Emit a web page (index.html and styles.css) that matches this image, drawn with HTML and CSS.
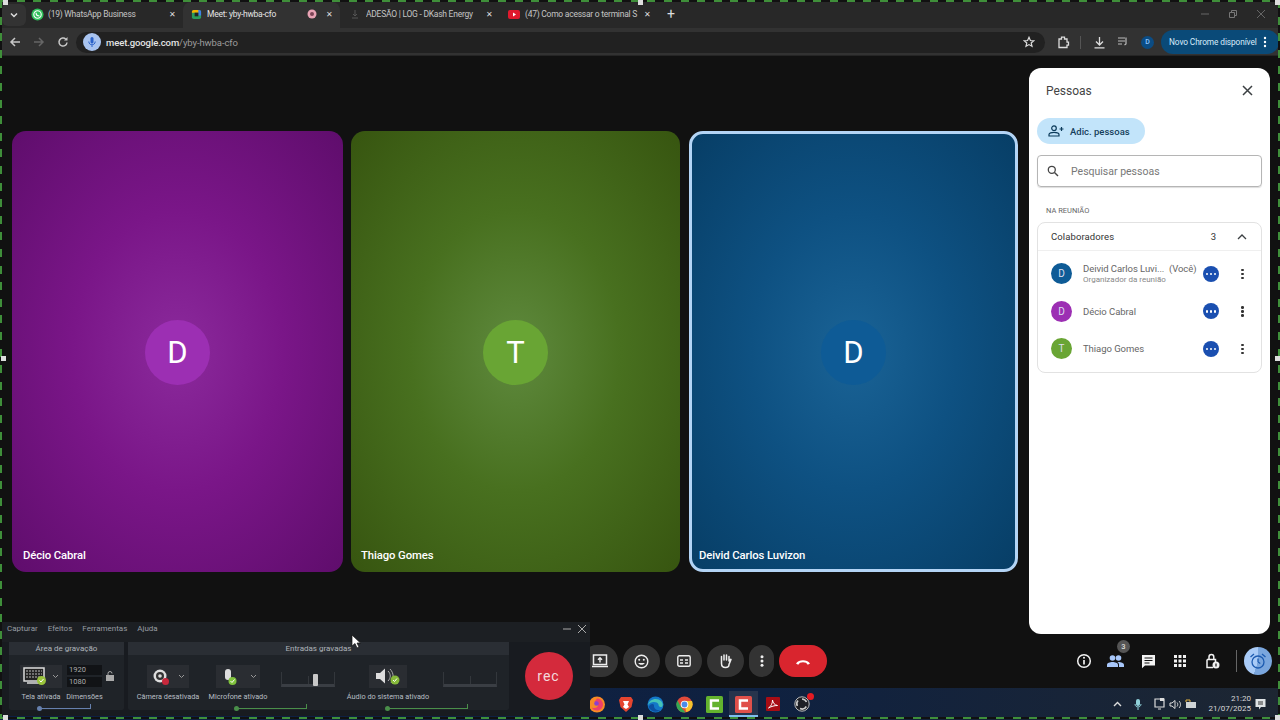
FILE: index.html
```html
<!DOCTYPE html>
<html lang="pt-BR">
<head>
<meta charset="utf-8">
<title>Meet: yby-hwba-cfo</title>
<link rel="stylesheet" href="styles.css">
</head>
<body>
<div class="screen">
  <header class="tabstrip">
    <div class="tab-menu"><svg width="10" height="10" viewBox="0 0 10 10"><path d="M2 3.5 5 6.5 8 3.5" fill="none" stroke="#ddd" stroke-width="1.5"/></svg></div>
    <div class="tab tab-wa">
      <svg class="fav" width="13" height="13" viewBox="0 0 14 14"><circle cx="7" cy="7" r="6.5" fill="#2fc25b"/><circle cx="7" cy="7" r="4" fill="none" stroke="#fff" stroke-width="1.2"/><path d="M5.5 5c0 2 1.500 3.500 3.500 3.500" stroke="#fff" stroke-width="1.300" fill="none"/></svg>
      <span class="tab-title">(19) WhatsApp Business</span>
      <span class="tab-x">✕</span>
    </div>
    <div class="tab tab-active">
      <svg class="fav" width="11" height="11" viewBox="0 0 12 12"><rect x="1" y="1" width="10" height="10" rx="2" fill="#2a9d5c"/><path d="M1 3a2 2 0 0 1 2-2h6v3H1z" fill="#f4b400"/><path d="M8 1h1a2 2 0 0 1 2 2v4H8z" fill="#3f7fe8"/><rect x="4" y="4" width="4" height="4" fill="#232323"/></svg>
      <span class="tab-title tab-title-on">Meet: yby-hwba-cfo</span>
      <svg class="rec-dot" width="10" height="10" viewBox="0 0 10 10"><circle cx="5" cy="5" r="4.500" fill="#e8a3b4"/><circle cx="5" cy="5" r="2" fill="#7d4456"/></svg>
      <span class="tab-x">✕</span>
    </div>
    <div class="tab tab-ad">
      <svg class="fav" width="8" height="10" viewBox="0 0 8 10"><path d="M4 1v6M2 5l2 2 2-2M1 9h6" stroke="#555" fill="none"/></svg>
      <span class="tab-title">ADESÃO | LOG - DKash Energy</span>
      <span class="tab-x">✕</span>
    </div>
    <div class="tab tab-yt">
      <svg class="fav" width="12" height="9" viewBox="0 0 12 9"><rect width="12" height="9" rx="2" fill="#e0192d"/><path d="M5 2.500v4L8 4.500z" fill="#fff"/></svg>
      <span class="tab-title">(47) Como acessar o terminal S</span>
      <span class="tab-x">✕</span>
    </div>
    <span class="tab-new">+</span>
    <div class="win-btns">
      <svg width="10" height="10" viewBox="0 0 10 10"><path d="M1 5h8" stroke="#666"/></svg>
      <svg width="10" height="10" viewBox="0 0 10 10"><path d="M1.500 3.500h5v5h-5zM3.500 3.500v-2h5v5h-2" stroke="#777" fill="none"/></svg>
      <svg width="10" height="10" viewBox="0 0 10 10"><path d="M1 1l8 8M9 1l-8 8" stroke="#666"/></svg>
    </div>
  </header>

  <nav class="toolbar">
    <svg class="nav-ic" width="12" height="12" viewBox="0 0 12 12"><path d="M11 6H2M6 2 2 6l4 4" fill="none" stroke="#c8c8c8" stroke-width="1.500"/></svg>
    <svg class="nav-ic" width="12" height="12" viewBox="0 0 12 12"><path d="M1 6h9M6 2l4 4-4 4" fill="none" stroke="#666" stroke-width="1.500"/></svg>
    <svg class="nav-ic" width="12" height="12" viewBox="0 0 12 12"><path d="M10 6.500A4 4 0 1 1 8.800 3.200" fill="none" stroke="#c8c8c8" stroke-width="1.500"/><path d="M10.500 1v3.500H7z" fill="#c8c8c8"/></svg>
    <div class="omnibox">
      <span class="mic-pill"><svg width="10" height="12" viewBox="0 0 10 12"><rect x="3.500" y="1" width="3" height="6.500" rx="1.500" fill="#2b62c9"/><path d="M1.800 5.500c0 4.400 6.400 4.400 6.400 0M5 9.200V11" fill="none" stroke="#2b62c9"/></svg></span>
      <span class="url"><b>meet.google.com</b>/yby-hwba-cfo</span>
      <svg class="star" width="12" height="12" viewBox="0 0 12 12"><path d="M6 1.300 7.400 4.500l3.400.3-2.600 2.200.8 3.300L6 8.600 3 10.300l.8-3.300L1.200 4.800l3.400-.3z" fill="none" stroke="#ddd" stroke-width="1.200"/></svg>
    </div>
    <div class="tool-right">
      <svg width="14" height="14" viewBox="0 0 14 14"><path d="M3 4h2.500V2.200h3V4H11v3.200h1.500v3H11V12.500H3z" fill="none" stroke="#ddd" stroke-width="1.300"/></svg>
      <span class="tool-sep"></span>
      <svg class="ic-dl" width="13" height="13" viewBox="0 0 13 13"><path d="M6.500 1v7.500M3 5.500l3.500 3.500L10 5.500M1.500 11.800h10" fill="none" stroke="#ddd" stroke-width="1.300"/></svg>
      <svg class="ic-list" width="12" height="12" viewBox="0 0 12 12"><path d="M1 2h7M1 5h7M1 8h4" stroke="#bbb" stroke-width="1.200"/><path d="M9 1.500V8l-1.500 1" stroke="#bbb" stroke-width="1.200" fill="none"/></svg>
      <span class="avatar-mini">D</span>
      <span class="update-pill">Novo Chrome disponível<svg width="4" height="12" viewBox="0 0 4 12"><circle cx="2" cy="2" r="1.200" fill="#fff"/><circle cx="2" cy="6" r="1.200" fill="#fff"/><circle cx="2" cy="10" r="1.200" fill="#fff"/></svg></span>
    </div>
  </nav>

  <main class="meet">
    <div class="meet-top">
      <section class="tiles">
        <article class="tile tile-purple"><span class="tile-av av-purple">D</span><span class="tile-name">Décio Cabral</span></article>
        <article class="tile tile-green"><span class="tile-av av-green">T</span><span class="tile-name">Thiago Gomes</span></article>
        <article class="tile tile-blue"><span class="tile-av av-blue">D</span><span class="tile-name">Deivid Carlos Luvizon</span></article>
      </section>
      <aside class="panel">
        <div class="panel-head">
          <h2>Pessoas</h2>
          <svg width="11" height="11" viewBox="0 0 11 11"><path d="M1 1l9 9M10 1l-9 9" stroke="#3c4043" stroke-width="1.500"/></svg>
        </div>
        <button class="add-btn"><svg width="16" height="12" viewBox="0 0 16 12"><circle cx="6" cy="3.200" r="2.300" fill="none" stroke="#0b3a5a" stroke-width="1.200"/><path d="M1 11V9.500C1 8 3.500 7.300 6 7.300s5 .7 5 2.200V11z" fill="none" stroke="#0b3a5a" stroke-width="1.200"/><path d="M11.500 4h4M13.500 2v4" stroke="#0b3a5a" stroke-width="1.200"/></svg>Adic. pessoas</button>
        <div class="search"><svg width="12" height="12" viewBox="0 0 12 12"><circle cx="4.800" cy="4.800" r="3.500" fill="none" stroke="#444" stroke-width="1.300"/><path d="M7.500 7.500 11 11" stroke="#444" stroke-width="1.400"/></svg><span>Pesquisar pessoas</span></div>
        <div class="section-label">NA REUNIÃO</div>
        <div class="card">
          <div class="card-head"><span class="card-title">Colaboradores</span><span class="card-count">3</span><svg width="10" height="6" viewBox="0 0 10 6"><path d="M1 5l4-4 4 4" fill="none" stroke="#3c4043" stroke-width="1.300"/></svg></div>
          <div class="people">
            <div class="person">
              <span class="p-av av-blue">D</span>
              <div class="p-text"><span class="p-name">Deivid Carlos Luvi...&nbsp;&nbsp;(Você)</span><span class="p-sub">Organizador da reunião</span></div>
              <span class="p-more"><i></i><i></i><i></i></span>
              <span class="kebab"><i></i><i></i><i></i></span>
            </div>
            <div class="person">
              <span class="p-av av-purple">D</span>
              <div class="p-text"><span class="p-name">Décio Cabral</span></div>
              <span class="p-more"><i></i><i></i><i></i></span>
              <span class="kebab"><i></i><i></i><i></i></span>
            </div>
            <div class="person">
              <span class="p-av av-green">T</span>
              <div class="p-text"><span class="p-name">Thiago Gomes</span></div>
              <span class="p-more"><i></i><i></i><i></i></span>
              <span class="kebab"><i></i><i></i><i></i></span>
            </div>
          </div>
        </div>
      </aside>
    </div>
    <div class="controls">
      <div class="ctrl-center">
        <span class="c-btn"><svg width="16" height="14" viewBox="0 0 16 14"><rect x="1.500" y="1" width="13" height="9.500" fill="none" stroke="#eee" stroke-width="1.500"/><path d="M8 8.500V4M6 5.800 8 3.700l2 2.100M0 12.500h16" fill="none" stroke="#eee" stroke-width="1.400"/></svg></span>
        <span class="c-btn"><svg width="15" height="15" viewBox="0 0 15 15"><circle cx="7.500" cy="7.500" r="6.300" fill="none" stroke="#eee" stroke-width="1.400"/><circle cx="5.200" cy="5.800" r="1" fill="#eee"/><circle cx="9.800" cy="5.800" r="1" fill="#eee"/><path d="M4.300 9h6.400c-.6 2.400-5.800 2.400-6.400 0z" fill="#eee"/></svg></span>
        <span class="c-btn"><svg width="14" height="12" viewBox="0 0 14 12"><rect x=".8" y=".8" width="12.400" height="10.400" rx="1.500" fill="none" stroke="#eee" stroke-width="1.400"/><path d="M3 5h3M8 5h3M3 8h3M8 8h3" stroke="#eee" stroke-width="1.300"/></svg></span>
        <span class="c-btn"><svg width="15" height="16" viewBox="0 0 15 16"><path d="M3.500 8V3.500M6 7V2M8.500 7V2M11 8V3.500M11 8l1.800-1.800M3.500 8v2.500c0 2.500 1.800 4 4 4s3.500-1.500 3.500-3L13 6.500" fill="none" stroke="#eee" stroke-width="1.500" stroke-linecap="round"/></svg></span>
        <span class="c-btn c-narrow"><svg width="4" height="12" viewBox="0 0 4 12"><circle cx="2" cy="1.700" r="1.500" fill="#eee"/><circle cx="2" cy="6" r="1.500" fill="#eee"/><circle cx="2" cy="10.300" r="1.500" fill="#eee"/></svg></span>
        <span class="c-btn c-end"><svg width="16" height="7" viewBox="0 0 16 7"><path d="M1 5.500C4 1.200 12 1.200 15 5.500l-2.200 1.300-1.800-2c-2-.7-4-.7-6 0l-1.800 2z" fill="#fff"/></svg></span>
      </div>
      <div class="ctrl-right">
        <svg width="16" height="16" viewBox="0 0 16 16"><circle cx="8" cy="8" r="6.300" fill="none" stroke="#f2f2f2" stroke-width="1.500"/><path d="M8 7v4.500" stroke="#f2f2f2" stroke-width="1.700"/><circle cx="8" cy="4.800" r="1" fill="#f2f2f2"/></svg>
        <span class="people-ic"><svg width="17" height="12" viewBox="0 0 17 12"><circle cx="5.500" cy="3" r="2.800" fill="#a8c7fa"/><circle cx="11.500" cy="3" r="2.800" fill="#a8c7fa"/><path d="M0 12V9.800C0 8 3 7 5.500 7S11 8 11 9.800V12zM12 12V9.800c0-1-.5-2-1.800-2.700C13 6.700 17 7.800 17 9.800V12z" fill="#a8c7fa"/></svg><span class="people-badge">3</span></span>
        <svg width="15" height="15" viewBox="0 0 15 15"><path d="M1 1h13v10.500H4L1 14.200z" fill="#f2f2f2"/><path d="M3.500 4h8M3.500 6.500h8M3.500 9h5" stroke="#111" stroke-width="1"/></svg>
        <svg width="12" height="12" viewBox="0 0 12 12"><g fill="#f2f2f2"><rect width="3" height="3"/><rect x="4.500" width="3" height="3"/><rect x="9" width="3" height="3"/><rect y="4.500" width="3" height="3"/><rect x="4.500" y="4.500" width="3" height="3"/><rect x="9" y="4.500" width="3" height="3"/><rect y="9" width="3" height="3"/><rect x="4.500" y="9" width="3" height="3"/><rect x="9" y="9" width="3" height="3"/></g></svg>
        <svg width="15" height="16" viewBox="0 0 15 16"><path d="M2 6.500h8.500V9M2 6.500v8h6M4 6.500V4a2.400 2.400 0 0 1 4.800 0v2.500" fill="none" stroke="#f2f2f2" stroke-width="1.500"/><circle cx="11" cy="12" r="3.500" fill="#f2f2f2"/><path d="M11 10.500v3" stroke="#111" stroke-width="1.200"/></svg>
        <span class="ctrl-sep"></span>
        <span class="timer"><svg width="20" height="20" viewBox="0 0 20 20"><circle cx="10" cy="11" r="6" fill="none" stroke="#1d5bb0" stroke-width="1.300"/><path d="M10 7.500V11l2.300 1.500M2.500 6l3.500-3M17.500 6 14 3" fill="none" stroke="#1d5bb0" stroke-width="1.300"/></svg></span>
      </div>
    </div>
  </main>

  <footer class="taskbar">
    <div class="apps">
      <span class="app"><svg width="18" height="17" viewBox="0 0 18 17"><circle cx="9" cy="8.500" r="8" fill="#f78a26"/><path d="M9 2.500c3.500 0 6 2.700 6 6s-2.500 6-6 6c-2.500 0-4.500-1.300-5.200-3 2.500 1.200 6.200.5 6.200-2.500 0-1.800-1.800-3-3.600-3z" fill="#ee3f6a"/><circle cx="8.500" cy="7.500" r="2.300" fill="#8a3fd1"/></svg></span>
      <span class="app"><svg width="16" height="17" viewBox="0 0 16 17"><path d="M3 1h10l2 3-1.500 7L8 16 2.500 11 1 4z" fill="#e5452f"/><path d="M5 5h6L9.500 8.500 11 11l-3 2-3-2 1.500-2.500z" fill="#fff"/></svg></span>
      <span class="app"><svg width="17" height="17" viewBox="0 0 17 17"><circle cx="8.500" cy="8.500" r="8" fill="#1478c8"/><path d="M1 9c1-6 9-8 13-4 2 2 2.500 5 .5 6-2 .5-3-1-3-2.500C10 5 3 5.500 1 9z" fill="#46c4b8"/><path d="M7 9c-.5 3 2 5.800 6 5-3 3-9 2-11.500-3C3 8 6 7 7 9z" fill="#0d4fa0"/></svg></span>
      <span class="app"><svg width="17" height="17" viewBox="0 0 17 17"><circle cx="8.500" cy="8.500" r="8" fill="#e04a3a"/><path d="M8.500 5H16a8 8 0 0 1-6 11z" fill="#f5c22d"/><path d="M1.500 4.500 5 11l4.500 5.500A8 8 0 0 1 1.500 4.500z" fill="#34a853"/><circle cx="8.500" cy="8.500" r="3.800" fill="#fff"/><circle cx="8.500" cy="8.500" r="2.900" fill="#4a8be8"/></svg></span>
      <span class="app"><svg width="17" height="17" viewBox="0 0 17 17"><rect width="17" height="17" rx="1.500" fill="#63b32e"/><path d="M13 4.500H5v8h8" fill="none" stroke="#fff" stroke-width="2.500"/></svg></span>
      <span class="app app-open"><svg width="17" height="17" viewBox="0 0 17 17"><rect width="17" height="17" rx="1.500" fill="#e0504a"/><path d="M13 4.500H5v8h8" fill="none" stroke="#fff" stroke-width="2.500"/></svg></span>
      <span class="app"><svg width="14" height="14" viewBox="0 0 14 14"><rect width="14" height="14" rx="1" fill="#a80d15"/><path d="M2.500 11c3-2 4-5 4-8 .5 3 2 5 5 5.500-3 0-6 .8-9 2.500z" fill="none" stroke="#fff" stroke-width="1"/></svg></span>
      <span class="app app-obs"><svg width="16" height="16" viewBox="0 0 16 16"><circle cx="8" cy="8" r="7.200" fill="#1d1f25" stroke="#bbb" stroke-width="1"/><path d="M8 3a5 5 0 0 1 4.500 3M12.300 10.500A5 5 0 0 1 6 12.600M3.300 10A5 5 0 0 1 4 4.500" fill="none" stroke="#ccc" stroke-width="1.600"/></svg><i></i></span>
    </div>
    <div class="tray">
      <svg width="9" height="6" viewBox="0 0 9 6"><path d="M1 5l3.500-3.500L8 5" fill="none" stroke="#ddd" stroke-width="1.400"/></svg>
      <svg class="tray-mic" width="8" height="13" viewBox="0 0 8 13"><rect x="2" y="1" width="4" height="7" rx="2" fill="#8fd0d8"/><path d="M1 6c0 4 6 4 6 0M4 9.500V12" fill="none" stroke="#8fd0d8"/></svg>
      <svg width="11" height="12" viewBox="0 0 11 12"><path d="M1 1h9v8H1zM4 11h3" fill="none" stroke="#ddd" stroke-width="1.200"/><rect x="6" y="0" width="4" height="3" fill="#ddd"/></svg>
      <svg width="12" height="11" viewBox="0 0 12 11"><path d="M1 4h2l3-2.500v8L3 7H1z" fill="none" stroke="#ddd"/><path d="M8 3.500c1 1 1 3 0 4M10 2c2 2 2 5 0 7" fill="none" stroke="#ddd"/></svg>
      <svg width="12" height="10" viewBox="0 0 12 10"><rect x="1" y="3" width="10" height="6" fill="#cfd4d6"/><path d="M1 3V1h4v2" fill="none" stroke="#e0b040"/></svg>
      <div class="clock"><span>21:20</span><span>21/07/2025</span></div>
      <svg width="11" height="12" viewBox="0 0 11 12"><path d="M.500 1h10v8H6l-2 2.500V9H.500z" fill="#dfe3e5"/><path d="M3 4h5M3 6h5" stroke="#333"/></svg>
    </div>
  </footer>

  <section class="recorder">
    <div class="rec-menu">
      <span>Capturar</span><span>Efeitos</span><span>Ferramentas</span><span>Ajuda</span>
      <span class="rec-win">
        <svg width="8" height="8" viewBox="0 0 8 8"><path d="M0 4h8" stroke="#aaa"/></svg>
        <svg width="8" height="8" viewBox="0 0 8 8"><path d="M0 0l8 8M8 0 0 8" stroke="#aaa"/></svg>
      </span>
    </div>
    <div class="rec-body">
      <div class="rec-panel rec-area">
        <div class="rec-title">Área de gravação</div>
        <div class="rec-row">
          <div class="rec-item rec-screen">
            <span class="rec-box"><svg width="24" height="19" viewBox="0 0 24 19"><rect x="1" y="1" width="20" height="13" fill="#222" stroke="#ddd" stroke-width="1.500"/><path d="M3 4h16M3 7h16M3 10h16" stroke="#bbb" stroke-dasharray="2 1"/><path d="M4 16h14" stroke="#ddd" stroke-width="1.500"/><circle cx="18.500" cy="13.500" r="4.500" fill="#9ac43c"/><path d="M16.500 13.500l1.500 1.500 2.500-3" fill="none" stroke="#fff"/></svg><svg class="rec-chev" width="7" height="5" viewBox="0 0 7 5"><path d="M1 1l2.500 2.500L6 1" fill="none" stroke="#999"/></svg></span>
            <span class="rec-label">Tela ativada</span>
          </div>
          <div class="rec-item rec-dims">
            <span class="rec-input">1920</span>
            <span class="rec-input">1080</span>
            <span class="rec-label">Dimensões</span>
          </div>
          <svg class="rec-lock" width="8" height="10" viewBox="0 0 8 10"><rect y="4" width="8" height="6" fill="#aaa"/><path d="M2 4V2.500a2 2 0 0 1 4 0" fill="none" stroke="#aaa"/></svg>
        </div>
        <span class="rec-line line-blue"></span>
      </div>
      <div class="rec-panel rec-inputs">
        <div class="rec-title">Entradas gravadas</div>
        <div class="rec-row rec-row-in">
          <div class="rec-item rec-cam">
            <span class="rec-box"><svg width="18" height="18" viewBox="0 0 18 18"><circle cx="8" cy="8" r="6.500" fill="#ddd"/><circle cx="8" cy="8" r="4" fill="#333"/><circle cx="8" cy="8" r="1.800" fill="#ddd"/><circle cx="13.500" cy="13.500" r="3.500" fill="#c8283c"/></svg><svg class="rec-chev" width="7" height="5" viewBox="0 0 7 5"><path d="M1 1l2.500 2.500L6 1" fill="none" stroke="#999"/></svg></span>
            <span class="rec-label">Câmera desativada</span>
          </div>
          <div class="rec-item rec-mic">
            <span class="rec-box"><svg width="18" height="18" viewBox="0 0 18 18"><rect x="5" y="1" width="6" height="11" rx="3" fill="#ddd"/><circle cx="12.500" cy="13" r="4" fill="#7fc23c"/><path d="M10.500 13l1.500 1.500 2.500-3" fill="none" stroke="#fff"/></svg><svg class="rec-chev" width="7" height="5" viewBox="0 0 7 5"><path d="M1 1l2.500 2.500L6 1" fill="none" stroke="#999"/></svg></span>
            <span class="rec-label">Microfone ativado</span>
          </div>
          <div class="rec-slider"><i></i></div>
          <div class="rec-item rec-audio">
            <span class="rec-box"><svg width="26" height="19" viewBox="0 0 26 19"><path d="M1 6h4l5-4.500v15L5 12H1z" fill="#ddd"/><path d="M13 4c3 3 3 7 0 10M15 2c4 4 4 10 1 14" fill="none" stroke="#aaa"/><circle cx="20" cy="13" r="4.500" fill="#86b93a"/><path d="M18 13l1.500 1.500 2.500-3" fill="none" stroke="#fff"/></svg></span>
            <span class="rec-label">Áudio do sistema ativado</span>
          </div>
          <div class="rec-slider rec-meter"></div>
        </div>
        <span class="rec-line line-green line-mic"></span>
        <span class="rec-line line-green line-audio"></span>
      </div>
      <div class="rec-cta"><span class="rec-btn">rec</span></div>
    </div>
  </section>

  <div class="capture-frame">
    <span class="edge edge-top"></span><span class="edge edge-bottom"></span>
    <span class="edge edge-left"></span><span class="edge edge-right"></span>
    <span class="handle h-tl"></span><span class="handle h-tc"></span><span class="handle h-tr"></span>
    <span class="handle h-ml"></span><span class="handle h-mr"></span>
    <span class="handle h-bl"></span><span class="handle h-bc"></span><span class="handle h-br"></span>
  </div>
  <svg class="cursor" width="10" height="15" viewBox="0 0 10 15"><path d="M1 1v11l3-2.500L6 14l2-1-2-4h3.500z" fill="#fff" stroke="#111" stroke-width=".7"/></svg>
</div>
</body>
</html>
```
FILE: styles.css
```css
* { box-sizing: border-box; }
html, body { margin: 0; padding: 0; }
body { width: 1280px; height: 720px; overflow: hidden; background: #111; font-family: Roboto, "Open Sans", "Liberation Sans", sans-serif; }
.screen { position: relative; width: 1280px; height: 720px; display: flex; flex-direction: column; overflow: hidden; }

/* Chrome tabs */
.tabstrip { height: 28px; background: #282828; display: flex; align-items: flex-end; color: #c4c4c4; font-size: 8.500px; flex: none; }
.tab-menu { width: 24px; margin-left: 2px; margin-bottom: 2px; height: 22px; background: #333; border-radius: 6px; display: flex; align-items: center; justify-content: center; }
.tab { height: 26px; padding-bottom: 2px; display: flex; align-items: center; flex: none; }
.tab-wa { width: 157px; padding-left: 5px; }
.tab-active { width: 157px; padding-left: 8px; background: #323232; border-radius: 8px 8px 0 0; }
.tab-ad { width: 160px; padding-left: 11px; }
.tab-yt { width: 158px; padding-left: 8px; }
.fav { flex: none; margin-right: 4px; }
.tab-active .fav { margin-right: 5px; }
.tab-ad .fav { margin-right: 7px; }
.tab-yt .fav { margin-right: 5px; }
.tab-title { white-space: nowrap; overflow: hidden; flex: 1; letter-spacing: -.25px; }
.tab-title-on { color: #e4e4e4; }
.tab-x { font-size: 8px; color: #ddd; margin-right: 6px; margin-left: 4px; width: 10px; text-align: center; }
.rec-dot { flex: none; margin-right: 3px; }
.tab-new { color: #ddd; font-size: 14px; margin-left: 9px; align-self: center; }
.win-btns { margin-left: auto; display: flex; gap: 18px; padding-right: 14px; align-items: center; align-self: center; }

/* Toolbar */
.toolbar { height: 28px; background: #323232; display: flex; align-items: center; padding: 1px 1px 0 9px; flex: none; border-bottom: 1px solid #252525; }
.nav-ic { margin-right: 12px; flex: none; }
.omnibox { width: 969px; height: 21px; margin-left: -5px; margin-right: 11px; background: #212121; border-radius: 11px; display: flex; align-items: center; padding-left: 7px; padding-right: 10px; flex: none; }
.mic-pill { width: 18px; height: 18px; border-radius: 50%; background: #a9c4f0; display: flex; align-items: center; justify-content: center; margin-right: 5px; }
.url { font-size: 9.500px; color: #9c9c9c; letter-spacing: -.1px; }
.url b { color: #e4e4e4; font-weight: 500; }
.star { margin-left: auto; }
.tool-right { display: flex; align-items: center; flex: 1; }
.tool-sep { width: 1px; height: 13px; background: #555; margin: 0 12px 0 10px; }
.ic-dl { margin-right: 11px; }
.ic-list { margin-right: 12px; }
.avatar-mini { width: 13px; height: 13px; border-radius: 50%; background: #0b4c84; color: #8fc5ff; font-size: 7px; display: flex; align-items: center; justify-content: center; margin-right: 7px; font-weight: 500; }
.update-pill { width: 118px; height: 24px; border-radius: 12px; background: #0a4a78; color: #d8ecfb; font-size: 8.300px; display: flex; align-items: center; justify-content: space-between; padding: 0 12px 0 8px; white-space: nowrap; letter-spacing: -.1px; }

/* Meet */
.meet { flex: 1; min-height: 0; background: #111; display: flex; flex-direction: column; }
.meet-top { display: flex; height: 579px; padding-top: 12px; padding-right: 10px; flex: none; }
.tiles { flex: 1; display: grid; grid-template-columns: 331px 329px 330px; column-gap: 8px; padding: 63px 11px 0 12px; min-width: 0; height: 504px; }
.tile { border-radius: 14px; height: 441px; position: relative; display: flex; align-items: center; justify-content: center; }
.tile-purple { background: radial-gradient(ellipse at center, #8b2a9c 0%, #7a1688 45%, #5f0d6c 100%); }
.tile-green { background: radial-gradient(ellipse at center, #5f8a3e 0%, #48701f 45%, #375510 100%); }
.tile-blue { margin-left: 1px; background: radial-gradient(ellipse at center, #1a6396 0%, #0e5182 45%, #073e66 100%); border: 3px solid #b3d4f5; }
.tile-av { width: 65px; height: 65px; border-radius: 50%; display: flex; align-items: center; justify-content: center; color: #fff; font-size: 31px; margin-top: 1px; }
.av-purple { background: #9c2fb3; }
.av-green { background: #69a534; }
.av-blue { background: #0e5b96; }
.tile-name { position: absolute; left: 10px; bottom: 10px; color: #fff; font-size: 11.300px; font-weight: 500; letter-spacing: -.1px; white-space: nowrap; }
.tile-purple .tile-name { left: 11px; }
.tile-blue .tile-name { left: 7px; bottom: 7px; }

/* People panel */
.panel { width: 241px; height: 566px; flex: none; background: #fff; border-radius: 12px; padding: 0 8px; color: #3c4043; }
.panel-head { height: 45px; display: flex; align-items: center; justify-content: space-between; padding: 0 9px 0 9px; }
.panel-head h2 { margin: 0; font-size: 12px; font-weight: 400; color: #444; }
.add-btn { height: 26px; width: 108px; margin: 5px 0 0; border: 0; border-radius: 13px; background: #c2e4fa; color: #153f5c; font: 500 9.500px Roboto, "Open Sans", "Liberation Sans", sans-serif; display: flex; align-items: center; gap: 6px; padding: 0 0 0 11px; }
.search { width: 225px; height: 32px; margin-top: 11px; border: 1px solid #b5b5b5; border-radius: 4px; display: flex; align-items: center; gap: 12px; padding-left: 9px; font-size: 10.500px; color: #777; box-shadow: 0 1px 1px #ddd; }
.section-label { font-size: 7.500px; color: #666; margin: 19px 0 0 9px; height: 16px; line-height: 9px; }
.card { width: 225px; height: 151px; border: 1px solid #e2e2e2; border-radius: 8px; }
.card-head { height: 28px; display: flex; align-items: center; padding: 0 14px 0 13px; border-bottom: 1px solid #efefef; font-size: 9.500px; color: #333; }
.card-title { flex: 1; letter-spacing: .1px; }
.card-count { margin-right: 21px; font-size: 9.500px; }
.people { padding-top: 4px; }
.person { height: 37.500px; display: flex; align-items: center; padding-left: 13px; }
.p-av { width: 21px; height: 21px; border-radius: 50%; color: #dde; font-size: 10px; display: flex; align-items: center; justify-content: center; flex: none; }
.p-text { width: 111px; margin-left: 11px; margin-right: 2px; display: flex; flex-direction: column; white-space: nowrap; }
.p-name { font-size: 9.500px; color: #666; letter-spacing: -.05px; }
.p-sub { font-size: 8px; color: #888; margin-top: 1px; }
.p-more { width: 16px; height: 16px; border-radius: 50%; background: #1a4fb0; display: flex; align-items: center; justify-content: center; gap: 1.500px; flex: none; margin-left: 7px; }
.p-more i { width: 2.500px; height: 2.500px; border-radius: 50%; background: #fff; }
.kebab { width: 3px; display: flex; flex-direction: column; gap: 1.500px; margin-left: 22px; flex: none; }
.kebab i { width: 2.500px; height: 2.500px; border-radius: 50%; background: #333; }

/* Meet controls */
.controls { height: 53px; flex: none; display: flex; align-items: flex-start; padding-top: 10px; }
.ctrl-center { display: flex; gap: 5px; margin-left: 581px; }
.c-btn { width: 37px; height: 32px; border-radius: 16px; background: #333; display: flex; align-items: center; justify-content: center; }
.c-narrow { width: 25px; }
.c-end { width: 48px; background: #d9252e; }
.ctrl-right { margin-left: auto; display: flex; align-items: center; height: 32px; padding-right: 8px; }
.ctrl-right > svg:nth-child(1) { margin-right: 15px; }
.ctrl-right > svg:nth-child(3) { margin-right: 18px; margin-left: 17px; }
.ctrl-right > svg:nth-child(4) { margin-right: 19px; }
.people-ic { position: relative; display: flex; }
.people-badge { position: absolute; left: 10px; top: -15px; width: 13px; height: 13px; background: #555; color: #ddd; border-radius: 50%; font-size: 7.500px; font-weight: 500; display: flex; align-items: center; justify-content: center; }
.ctrl-sep { width: 1px; height: 22px; background: #666; margin: 0 7px 0 16px; }
.timer { width: 28px; height: 28px; border-radius: 50%; background: conic-gradient(#7aa6dd 0 55%, #a9cbf7 55% 100%); display: flex; align-items: center; justify-content: center; }

/* Taskbar */
.taskbar { height: 32px; flex: none; background: linear-gradient(90deg, #0d1f44 0%, #0f2140 60%, #1d2632 100%); display: flex; align-items: center; padding: 0 14px 0 582px; }
.apps { display: flex; height: 26px; }
.app { width: 29.400px; height: 26px; display: flex; align-items: center; justify-content: center; position: relative; }
.app-open { background: #27344c; box-shadow: inset 0 -2px 0 #7fbdf0; }
.app-obs i { position: absolute; right: 3px; top: 2px; width: 7px; height: 7px; background: #e41b23; border-radius: 50%; }
.tray { margin-left: auto; display: flex; align-items: center; gap: 4px; color: #ddd; }
.tray-mic { margin: 0 8px; }
.clock { display: flex; flex-direction: column; align-items: flex-end; font-size: 8px; line-height: 10.500px; margin-left: 7px; color: #d8d8d8; }

/* Recorder window */
.recorder { position: absolute; left: 0; top: 622px; width: 590px; height: 94px; background: #181b20; color: #b8bec4; font-size: 7.500px; display: flex; flex-direction: column; }
.rec-menu { height: 20px; display: flex; align-items: flex-start; gap: 10px; padding: 2px 4px 0 7px; font-size: 8px; color: #969ca2; background: #1c1f23; flex: none; }
.rec-win { margin-left: auto; display: flex; gap: 7px; align-items: center; height: 10px; }
.rec-body { display: flex; padding: 0 0 6px 9px; gap: 4px; flex: 1; }
.rec-panel { background: #1f2328; border-radius: 2px; display: flex; flex-direction: column; position: relative; }
.rec-area { width: 115px; }
.rec-inputs { width: 381px; }
.rec-title { height: 13px; background: #2a2e34; text-align: center; line-height: 13px; color: #aeb4ba; flex: none; font-size: 8px; }
.rec-row { display: flex; padding-top: 10px; align-items: flex-start; }
.rec-item { display: flex; flex-direction: column; align-items: center; }
.rec-box { width: 42px; height: 23px; background: #2a2d32; display: flex; align-items: center; justify-content: center; gap: 8px; }
.rec-screen .rec-box { gap: 5px; }
.rec-label { margin-top: 4px; white-space: nowrap; font-size: 7.300px; line-height: 10px; }
.rec-screen { margin-left: 11px; width: 42px; }
.rec-dims { margin-left: 5px; width: 35px; gap: 2px; }
.rec-input { width: 35px; height: 10px; background: #111316; color: #aaa; line-height: 10px; padding-left: 2px; font-size: 7.500px; }
.rec-dims .rec-label { margin-top: 3px; }
.rec-lock { margin: 6px 0 0 4px; }
.rec-row-in { padding-left: 19px; }
.rec-cam { width: 42px; }
.rec-mic { width: 44px; margin-left: 27px; }
.rec-mic .rec-box { width: 44px; gap: 12px; }
.rec-slider { width: 54px; height: 15px; margin: 7px 0 0 21px; border: 1px solid #33373c; border-top: 0; border-bottom: 3px solid #3a3e44; position: relative; }
.rec-slider::before { content: ""; position: absolute; left: 50%; top: 4px; bottom: 0; width: 1px; background: #33373c; }
.rec-slider i { position: absolute; left: 31px; top: 2px; width: 5px; height: 12px; background: #c8c8c8; border-radius: 1px; }
.rec-audio { width: 38px; margin-left: 34px; }
.rec-audio .rec-box { width: 38px; }
.rec-meter { margin-left: 36px; }
.rec-line { display: block; height: 1px; position: absolute; bottom: 1px; }
.rec-line::before { content: ""; position: absolute; left: -2px; top: -2px; width: 5px; height: 5px; border-radius: 50%; background: inherit; }
.rec-line::after { content: ""; position: absolute; right: 0; bottom: 0; width: 1px; height: 5px; background: inherit; }
.line-blue { left: 30px; width: 52px; background: #6680ad; }
.line-green { background: #4a8f4a; }
.line-mic { left: 108px; width: 71px; }
.line-audio { left: 259px; width: 81px; }
.rec-cta { flex: 1; display: flex; align-items: flex-start; justify-content: center; padding: 10px 6px 0 0; }
.rec-btn { width: 48px; height: 48px; border-radius: 50%; background: #d42a3c; color: #f3d9dc; font-size: 14px; letter-spacing: 1px; display: flex; align-items: center; justify-content: center; }

/* Capture frame drawn over the whole screen */
.capture-frame { position: absolute; inset: 0; pointer-events: none; }
.edge { position: absolute; }
.edge-top { left: 0; right: 0; top: 0; height: 2px; background: repeating-linear-gradient(90deg, #3f8f3a 0 8px, #111 8px 16.600px); }
.edge-bottom { left: 0; right: 0; top: 717px; height: 2px; background: repeating-linear-gradient(90deg, #3f8f3a 0 8px, #111 8px 16.600px); }
.edge-left { left: 0; top: 0; width: 2px; height: 719px; background: repeating-linear-gradient(180deg, #3f8f3a 0 8px, #111 8px 16.600px); }
.edge-right { left: 1278px; top: 0; width: 2px; height: 719px; background: repeating-linear-gradient(180deg, #3f8f3a 0 8px, #111 8px 16.600px); }
.handle { position: absolute; width: 5px; height: 5px; background: #ddd; }
.h-tl { left: 3px; top: 0; }
.h-tc { left: 638px; top: 0; }
.h-tr { left: 1275px; top: 0; }
.h-ml { left: 1px; top: 356px; }
.h-mr { left: 1275px; top: 356px; }
.h-bl { left: 3px; top: 715px; }
.h-bc { left: 638px; top: 715px; }
.h-br { left: 1275px; top: 715px; }
.cursor { position: absolute; left: 351px; top: 634px; }
```
